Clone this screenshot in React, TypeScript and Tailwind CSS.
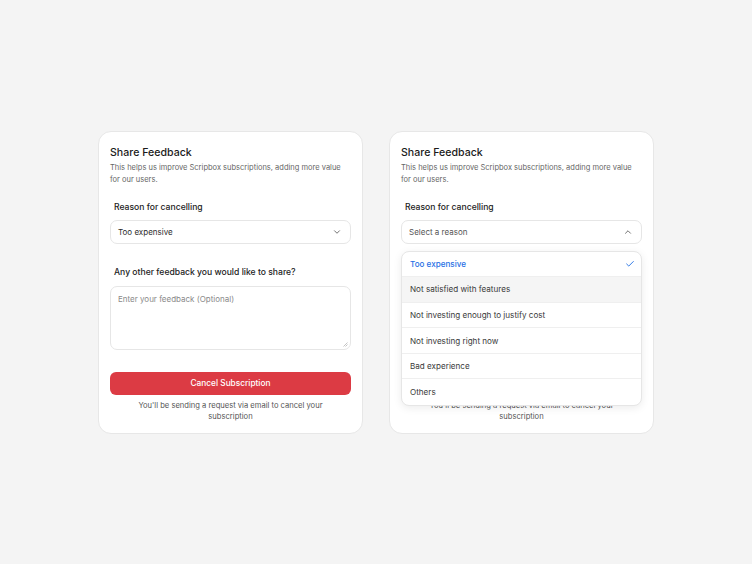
import { ChevronDown, ChevronUp, Check } from 'lucide-react';

const REASONS = [
  'Too expensive',
  'Not satisfied with features',
  'Not investing enough to justify cost',
  'Not investing right now',
  'Bad experience',
  'Others',
];

function Dropdown() {
  return (
    <ul className="absolute left-[11px] right-[11px] top-[119px] z-10 overflow-hidden rounded-[8px] border border-[#e6e6e6] bg-white shadow-[0_2px_8px_rgba(0,0,0,0.08)]">
      {REASONS.map((r, i) => (
        <li
          key={r}
          className={`flex h-[25.6px] items-center justify-between border-b border-[#efefef] pl-[8px] pr-[6px] text-[8.1px] last:border-b-0 ${
            i === 0 ? 'font-medium text-[#1f6fe5]' : 'text-[#3a3a3a]'
          } ${i === 1 ? 'bg-[#f5f5f5]' : ''}`}
        >
          <span>{r}</span>
          {i === 0 && <Check className="h-[10px] w-[10px] text-[#1f6fe5]" strokeWidth={2.2} />}
        </li>
      ))}
    </ul>
  );
}

function Card({ open }: { open?: boolean }) {
  return (
    <div className="relative flex w-[265px] flex-col rounded-[13px] border border-[#e7e7e7] bg-white px-[11px] pb-[11px] pt-[13px]">
      <h2 className="text-[10.6px] font-medium leading-[16px] text-[#1b1b1b]">Share Feedback</h2>
      <p className="mt-[1px] text-[7.5px] leading-[12px] text-[#666]">
        This helps us improve Scripbox subscriptions, adding more value for our users.
      </p>

      <label className="mt-[14px] pl-[4px] text-[8.6px] font-medium leading-[14px] text-[#222]">
        Reason for cancelling
      </label>
      <div className="mt-[6px] flex h-[24px] items-center justify-between rounded-[7px] border border-[#e6e6e6] pl-[7px] pr-[8px]">
        <span className={`text-[8px] ${open ? 'text-[#555]' : 'text-[#2d2d2d]'}`}>
          {open ? 'Select a reason' : 'Too expensive'}
        </span>
        {open ? (
          <ChevronUp className="h-[10px] w-[10px] text-[#555]" strokeWidth={2} />
        ) : (
          <ChevronDown className="h-[10px] w-[10px] text-[#555]" strokeWidth={2} />
        )}
      </div>

      <label className="mt-[21px] pl-[4px] text-[8.6px] font-medium leading-[14px] text-[#222]">
        Any other feedback you would like to share?
      </label>
      <div className="relative mt-[7px] flex h-[64px]">
        <textarea
          className="h-full w-full resize-none rounded-[7px] border border-[#e6e6e6] px-[7px] py-[6px] text-[8px] text-[#333] outline-none placeholder:text-[#8a8a8a]"
          placeholder="Enter your feedback (Optional)"
        />
        <svg className="pointer-events-none absolute bottom-[3px] right-[3px] h-[5px] w-[5px]" viewBox="0 0 5 5">
          <path d="M4.5 0.5 L0.5 4.5 M4.5 2.5 L2.5 4.5" stroke="#b5b5b5" strokeWidth="0.8" />
        </svg>
      </div>

      <button
        type="button"
        className="mt-[22px] h-[23px] rounded-[6px] bg-[#dc3b44] text-[8.3px] font-medium text-white"
      >
        Cancel Subscription
      </button>
      <p className="mt-[5px] px-[20px] text-center text-[7.6px] leading-[11px] text-[#555]">
        You'll be sending a request via email to cancel your subscription
      </p>

      {open && <Dropdown />}
    </div>
  );
}

export default function App() {
  return (
    <div
      className="flex h-[564px] w-full items-center justify-center gap-[26px] bg-[#f4f4f4]"
      style={{ fontFamily: 'Inter, "Noto Sans", sans-serif' }}
    >
      <Card />
      <Card open />
    </div>
  );
}
